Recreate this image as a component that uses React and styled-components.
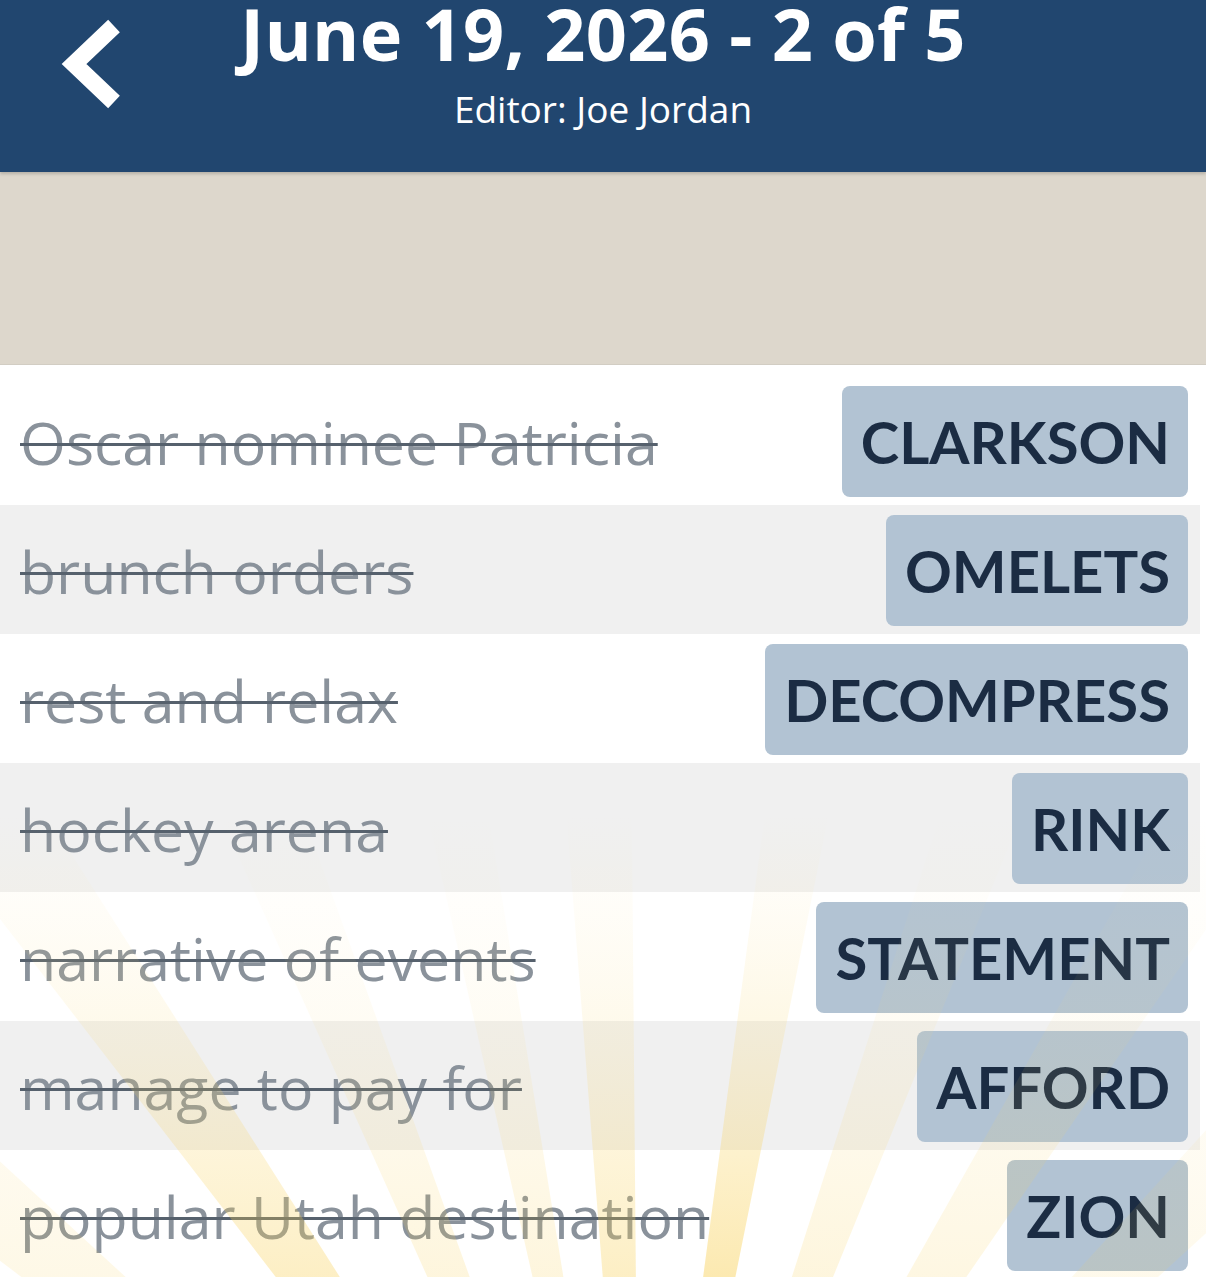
import React from "react";
import styled, { createGlobalStyle } from "styled-components";

const clues = [
  { clue: "Oscar nominee Patricia", answer: "CLARKSON" },
  { clue: "brunch orders", answer: "OMELETS" },
  { clue: "rest and relax", answer: "DECOMPRESS" },
  { clue: "hockey arena", answer: "RINK" },
  { clue: "narrative of events", answer: "STATEMENT" },
  { clue: "manage to pay for", answer: "AFFORD" },
  { clue: "popular Utah destination", answer: "ZION" },
];

// sunburst rays: angle from vertical (deg), half width (deg), strength
const rays = [
  { a: -50, w: 2.6, o: 0.25 },
  { a: -35, w: 2.6, o: 0.6 },
  { a: -22, w: 2.2, o: 0.35 },
  { a: -11, w: 1.8, o: 0.35 },
  { a: -2.5, w: 2.0, o: 0.6 },
  { a: 9.5, w: 1.9, o: 0.8 },
  { a: 20, w: 2.2, o: 0.35 },
  { a: 32, w: 2.6, o: 0.3 },
  { a: 45, w: 2.6, o: 0.2 },
];

const GlobalStyle = createGlobalStyle`
  html, body {
    margin: 0;
    padding: 0;
    background: #ffffff;
  }
  body {
    font-family: "Open Sans", "Liberation Sans", sans-serif;
    overflow: hidden;
  }
`;

const Page = styled.div`
  width: 1206px;
  height: 1277px;
  overflow: hidden;
  background: #ffffff;
`;

const Header = styled.header`
  height: 172px;
  background: #21466f;
  display: grid;
  grid-template-columns: 1fr auto 1fr;
  align-items: start;
  box-shadow: 0 2px 3px rgba(0, 0, 0, 0.18);
  position: relative;
  z-index: 1;
`;

const BackButton = styled.button`
  justify-self: start;
  margin: 18px 0 0 60px;
  padding: 0;
  border: none;
  background: none;
  width: 62px;
  height: 92px;
  cursor: pointer;
`;

const TitleBlock = styled.div`
  display: flex;
  flex-direction: column;
  align-items: center;
  color: #ffffff;
`;

const Title = styled.h1`
  margin: 3px 0 0;
  font-size: 72px;
  line-height: 60px;
  font-weight: 700;
  letter-spacing: 0.3px;
`;

const Subtitle = styled.div`
  margin-top: 26px;
  font-size: 37px;
  line-height: 40px;
  font-weight: 400;
`;

const Banner = styled.div`
  height: 193px;
  background: #ddd7cc;
  border-bottom: 1px solid #d2cdc3;
  box-sizing: border-box;
`;

const List = styled.div`
  position: relative;
  padding-top: 11px;
  background: #ffffff;
`;

const Row = styled.div`
  width: 1200px;
  height: 129px;
  box-sizing: border-box;
  padding: 10px 12px 8px 20px;
  display: flex;
  align-items: center;
  justify-content: space-between;
  background: ${(p) => (p.$shaded ? "#f0f0f0" : "#ffffff")};
`;

const Clue = styled.span`
  font-family: "Open Sans", "Liberation Sans", sans-serif;
  font-size: 59px;
  font-weight: 400;
  color: #8a929b;
  text-decoration: line-through;
  text-decoration-color: #56616d;
  text-decoration-thickness: 3px;
  white-space: nowrap;
`;

const Answer = styled.div`
  height: 111px;
  box-sizing: border-box;
  padding: 0 18px 0 19px;
  display: flex;
  align-items: center;
  background: #b2c3d3;
  border-radius: 8px;
  color: #1b2c43;
  font-family: Lato, "Open Sans", sans-serif;
  font-size: 58px;
  font-weight: 700;
`;

const Rays = styled.svg`
  position: absolute;
  left: 0;
  top: 0;
  width: 1206px;
  height: 914px;
  pointer-events: none;
`;

const Chevron = () => (
  <svg width="62" height="92" viewBox="0 0 62 92">
    <path
      d="M54 8 L14 46 L54 84"
      fill="none"
      stroke="#ffffff"
      strokeWidth="17"
      strokeLinejoin="miter"
    />
  </svg>
);

const Sunburst = () => {
  const cx = 640;
  const cy = 1385; // apex below the screen (list coordinates)
  const len = 1400;
  const toPoint = (deg) => {
    const r = (deg * Math.PI) / 180;
    return `${cx + Math.sin(r) * len},${cy - Math.cos(r) * len}`;
  };
  return (
    <Rays viewBox="0 0 1206 914">
      <defs>
        <linearGradient id="fade" gradientUnits="userSpaceOnUse" x1="0" y1="914" x2="0" y2="450">
          <stop offset="0" stopColor="#f8cd4c" stopOpacity="0.55" />
          <stop offset="0.5" stopColor="#f9d66a" stopOpacity="0.25" />
          <stop offset="1" stopColor="#fbe39a" stopOpacity="0" />
        </linearGradient>
      </defs>
      {rays.map((ray, i) => (
        <polygon
          key={i}
          points={`${cx},${cy} ${toPoint(ray.a - ray.w)} ${toPoint(ray.a + ray.w)}`}
          fill="url(#fade)"
          opacity={ray.o}
        />
      ))}
    </Rays>
  );
};

export default function App() {
  return (
    <Page>
      <GlobalStyle />
      <Header>
        <BackButton aria-label="Back">
          <Chevron />
        </BackButton>
        <TitleBlock>
          <Title>June 19, 2026 - 2 of 5</Title>
          <Subtitle>Editor: Joe Jordan</Subtitle>
        </TitleBlock>
        <div />
      </Header>
      <Banner />
      <List>
        {clues.map((c, i) => (
          <Row key={c.answer} $shaded={i % 2 === 1}>
            <Clue>{c.clue}</Clue>
            <Answer>{c.answer}</Answer>
          </Row>
        ))}
        <Sunburst />
      </List>
    </Page>
  );
}
